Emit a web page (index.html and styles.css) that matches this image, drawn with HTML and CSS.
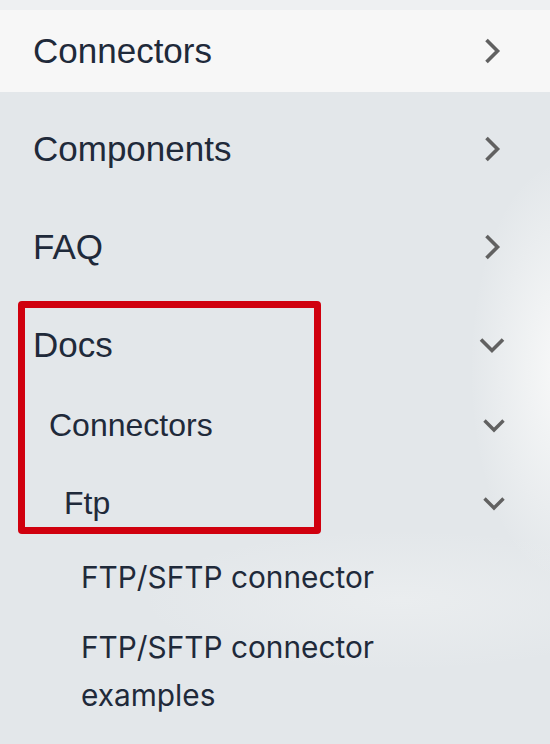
FILE: index.html
```html
<!DOCTYPE html>
<html lang="en">
<head>
<meta charset="utf-8">
<title>Docs navigation</title>
<link rel="stylesheet" href="styles.css">
</head>
<body>
<nav class="sidebar">
  <div class="top-strip"></div>
  <ul class="menu">
    <li class="row l1 active">
      <span class="label">Connectors</span>
      <svg class="icon right" width="24" height="28" viewBox="0 0 24 28"><path d="M6.5 3 L17.5 14 L6.5 25" fill="none" stroke="#616161" stroke-width="3.6"/></svg>
    </li>
    <li class="row l1 first">
      <span class="label">Components</span>
      <svg class="icon right" width="24" height="28" viewBox="0 0 24 28"><path d="M6.5 3 L17.5 14 L6.5 25" fill="none" stroke="#616161" stroke-width="3.6"/></svg>
    </li>
    <li class="row l1">
      <span class="label">FAQ</span>
      <svg class="icon right" width="24" height="28" viewBox="0 0 24 28"><path d="M6.5 3 L17.5 14 L6.5 25" fill="none" stroke="#616161" stroke-width="3.6"/></svg>
    </li>
    <li class="row l1 open">
      <span class="label">Docs</span>
      <svg class="icon down" width="28" height="20" viewBox="0 0 28 20"><path d="M3 4.5 L14 15.5 L25 4.5" fill="none" stroke="#616161" stroke-width="3.6"/></svg>
    </li>
    <li class="row l2">
      <span class="label">Connectors</span>
      <svg class="icon down-sm" width="26" height="18" viewBox="0 0 26 18"><path d="M3.5 4.5 L13 14 L22.5 4.5" fill="none" stroke="#616161" stroke-width="3.4"/></svg>
    </li>
    <li class="row l3">
      <span class="label">Ftp</span>
      <svg class="icon down-sm" width="26" height="18" viewBox="0 0 26 18"><path d="M3.5 4.5 L13 14 L22.5 4.5" fill="none" stroke="#616161" stroke-width="3.4"/></svg>
    </li>
    <li class="leaf">FTP/SFTP connector</li>
    <li class="leaf">FTP/SFTP connector examples</li>
  </ul>
  <div class="highlight-box"></div>
</nav>
</body>
</html>
```
FILE: styles.css
```css
html, body {
  margin: 0;
  padding: 0;
}
body {
  width: 550px;
  height: 744px;
  overflow: hidden;
  background: #e3e7ea;
  font-family: "Liberation Sans", Arial, sans-serif;
  color: #1f2a3a;
}
.sidebar {
  position: relative;
  width: 550px;
  height: 744px;
  background:
    radial-gradient(ellipse 95px 210px at 565px 370px, rgba(250,250,250,0.95) 0%, rgba(247,248,248,0.6) 45%, rgba(227,231,234,0) 100%),
    radial-gradient(ellipse 260px 70px at 400px 600px, rgba(240,242,243,0.55) 0%, rgba(227,231,234,0) 100%),
    #e3e7ea;
}
.top-strip {
  height: 10px;
  background: #eef0f2;
}
.menu {
  list-style: none;
  margin: 0;
  padding: 0;
}
.row {
  display: flex;
  align-items: center;
  box-sizing: border-box;
}
.label {
  flex: 1;
  white-space: nowrap;
}
.l1 {
  height: 98px;
  padding: 0 46px 0 33px;
  font-size: 35px;
}
.l1.active {
  height: 82px;
  background: #f7f7f7;
}
.l1.first {
  margin-top: 8px;
}
.l1.open {
  height: 90px;
  padding-top: 8px;
}
.l2, .l3 {
  height: 78px;
  padding-right: 43px;
  font-size: 32px;
}
.l2 { padding-left: 49px; }
.l3 { padding-left: 64px; }
.icon {
  flex: none;
  display: block;
}
.icon.down {
  margin-right: -2px;
}
.leaf {
  padding: 11.5px 150px 11.5px 81px;
  font-family: Inter, "Noto Sans", sans-serif;
  font-size: 29.8px;
  line-height: 47.5px;
  color: #1f2a3a;
}
.highlight-box {
  position: absolute;
  left: 18px;
  top: 301px;
  width: 303px;
  height: 233px;
  box-sizing: border-box;
  border: 7.3px solid #d0000e;
  border-radius: 4px;
}
```
